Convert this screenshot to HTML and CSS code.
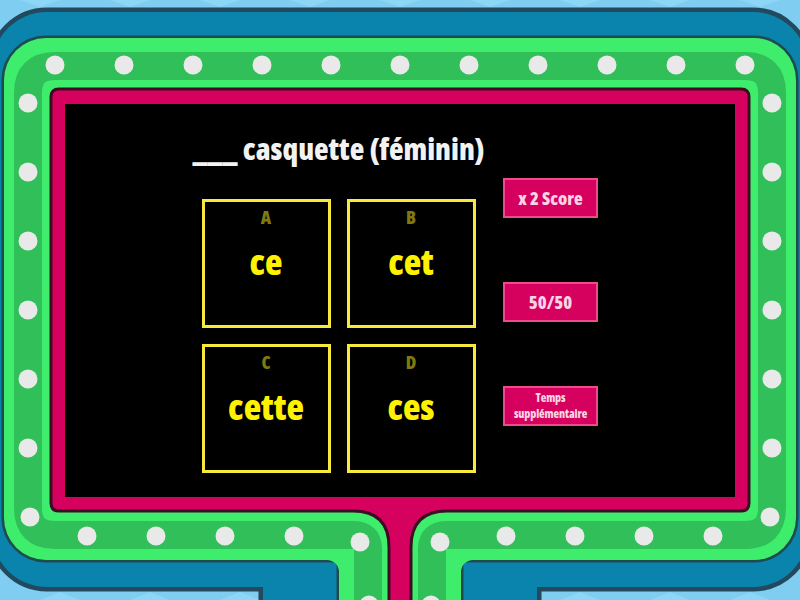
FILE: index.html
```html
<!DOCTYPE html>
<html lang="fr">
<head>
<meta charset="utf-8">
<title>Quiz</title>
<link rel="stylesheet" href="styles.css">
</head>
<body>
<div class="stage">
  <svg class="frame" width="800" height="600" viewBox="0 0 800 600" aria-hidden="true">
    <rect x="0" y="0" width="800" height="600" fill="#7fcdf0"/>
    <g fill="#8ed6f5">
      <polygon points="20,0 40,7 60,0"/><polygon points="110,0 130,7 150,0"/><polygon points="200,0 220,7 240,0"/>
      <polygon points="290,0 310,7 330,0"/><polygon points="380,0 400,7 420,0"/><polygon points="470,0 490,7 510,0"/>
      <polygon points="560,0 580,7 600,0"/><polygon points="650,0 670,7 690,0"/><polygon points="740,0 760,7 780,0"/>
      <polygon points="40,600 60,592 80,600"/><polygon points="130,600 150,592 170,600"/><polygon points="220,600 240,592 260,600"/>
      <polygon points="560,600 580,592 600,600"/><polygon points="650,600 670,592 690,600"/><polygon points="730,600 750,592 770,600"/>
    </g>
    <!-- blue panel -->
    <g stroke="#22495d" stroke-width="9" fill="#0a84ad">
      <rect x="-8" y="12" width="816" height="575" rx="55"/>
      <rect x="263" y="500" width="274" height="130"/>
    </g>
    <g fill="#0a84ad">
      <rect x="-8" y="12" width="816" height="575" rx="55"/>
      <rect x="263" y="500" width="274" height="130"/>
    </g>
    <!-- green frame -->
    <g stroke="#1f4b50" stroke-width="5" fill="#3ded6b">
      <rect x="4" y="38" width="792" height="522" rx="42"/>
      <rect x="339" y="480" width="122" height="150"/>
    </g>
    <g fill="#3ded6b">
      <rect x="4" y="38" width="792" height="522" rx="42"/>
      <rect x="339" y="480" width="122" height="150"/>
      <path d="M339,572 L339,560 L327,560 A12 12 0 0 1 339,572 Z"/>
      <path d="M461,572 L461,560 L473,560 A12 12 0 0 0 461,572 Z"/>
    </g>
    <path d="M368,640 V549 Q368,535 354,535 H55 Q28,535 28,508 V93 Q28,66 55,66 H745 Q772,66 772,93 V508 Q772,535 745,535 H446 Q432,535 432,549 V640" fill="none" stroke="#30bf58" stroke-width="28"/>
    <!-- magenta -->
    <path d="M59,89 H741 Q749,89 749,97 V503 Q749,511 741,511 H447 Q411,511 411,547 V640 H389 V547 Q389,511 353,511 H59 Q51,511 51,503 V97 Q51,89 59,89 Z" fill="#d6005e" stroke="#3d0c22" stroke-width="3"/>
    <!-- dots -->
    <g fill="#e9e9e9">
      <circle cx="55" cy="65" r="9.5"/><circle cx="124" cy="65" r="9.5"/><circle cx="193" cy="65" r="9.5"/>
      <circle cx="262" cy="65" r="9.5"/><circle cx="331" cy="65" r="9.5"/><circle cx="400" cy="65" r="9.5"/>
      <circle cx="469" cy="65" r="9.5"/><circle cx="538" cy="65" r="9.5"/><circle cx="607" cy="65" r="9.5"/>
      <circle cx="676" cy="65" r="9.5"/><circle cx="745" cy="65" r="9.5"/>
      <circle cx="28" cy="103" r="9.5"/><circle cx="28" cy="172" r="9.5"/><circle cx="28" cy="241" r="9.5"/>
      <circle cx="28" cy="310" r="9.5"/><circle cx="28" cy="379" r="9.5"/><circle cx="28" cy="448" r="9.5"/>
      <circle cx="30" cy="517" r="9.5"/>
      <circle cx="772" cy="103" r="9.5"/><circle cx="772" cy="172" r="9.5"/><circle cx="772" cy="241" r="9.5"/>
      <circle cx="772" cy="310" r="9.5"/><circle cx="772" cy="379" r="9.5"/><circle cx="772" cy="448" r="9.5"/>
      <circle cx="770" cy="517" r="9.5"/>
      <circle cx="87" cy="536" r="9.5"/><circle cx="156" cy="536" r="9.5"/><circle cx="225" cy="536" r="9.5"/>
      <circle cx="294" cy="536" r="9.5"/><circle cx="360" cy="542" r="9.5"/>
      <circle cx="440" cy="542" r="9.5"/><circle cx="506" cy="536" r="9.5"/><circle cx="575" cy="536" r="9.5"/>
      <circle cx="644" cy="536" r="9.5"/><circle cx="713" cy="536" r="9.5"/>
      <circle cx="369" cy="605" r="9.5"/><circle cx="431" cy="605" r="9.5"/>
    </g>
  </svg>

  <div class="overlay">
    <main class="screen">
      <div class="board">
        <section class="quiz">
          <h1 class="question">___ casquette (féminin)</h1>
          <div class="answers">
            <div class="answer"><span class="letter">A</span><span class="word">ce</span></div>
            <div class="answer"><span class="letter">B</span><span class="word">cet</span></div>
            <div class="answer"><span class="letter">C</span><span class="word">cette</span></div>
            <div class="answer"><span class="letter">D</span><span class="word">ces</span></div>
          </div>
        </section>
        <aside class="powerups">
          <div class="power">x 2 Score</div>
          <div class="power">50/50</div>
          <div class="power small">Temps<br>supplémentaire</div>
        </aside>
      </div>
    </main>
  </div>
</div>
</body>
</html>
```

FILE: styles.css
```css
html, body {
  margin: 0;
  padding: 0;
  width: 800px;
  height: 600px;
  overflow: hidden;
  background: #7fcdf0;
}

body {
  font-family: "Open Sans", "DejaVu Sans", sans-serif;
  font-stretch: 75%;
  font-weight: 800;
}

.stage {
  display: grid;
  width: 800px;
  height: 600px;
}

.frame,
.overlay {
  grid-area: 1 / 1;
}

.frame {
  display: block;
}

.overlay {
  padding: 104px 65px 103px 65px;
  position: relative;
}

.screen {
  width: 670px;
  height: 393px;
  background: #000;
}

.board {
  display: flex;
  justify-content: center;
  gap: 28px;
  padding-top: 28px;
}

.quiz {
  width: 273px;
  display: flex;
  flex-direction: column;
  align-items: center;
}

.question {
  margin: 0;
  font-size: 30px;
  line-height: 34px;
  font-weight: 800;
  color: #f2f2f2;
  white-space: nowrap;
}

.answers {
  margin-top: 33px;
  display: grid;
  grid-template-columns: 129px 129px;
  grid-auto-rows: 129px;
  gap: 16px;
}

.answer {
  box-sizing: border-box;
  border: 3px solid #f7ea3a;
  display: flex;
  flex-direction: column;
  align-items: center;
}

.letter {
  margin-top: 4px;
  font-size: 18px;
  line-height: 22px;
  color: #807a0e;
}

.word {
  margin-top: 14px;
  font-size: 36px;
  line-height: 40px;
  color: #fff200;
}

.powerups {
  display: flex;
  flex-direction: column;
  gap: 64px;
  padding-top: 46px;
}

.power {
  box-sizing: border-box;
  width: 95px;
  height: 40px;
  background: #d6005e;
  border: 2px solid #ee4a8f;
  color: #fbd3e4;
  font-size: 18px;
  line-height: 20px;
  display: flex;
  align-items: center;
  justify-content: center;
  text-align: center;
}

.power.small {
  font-size: 11.5px;
  line-height: 16px;
  letter-spacing: -0.1px;
}
```
